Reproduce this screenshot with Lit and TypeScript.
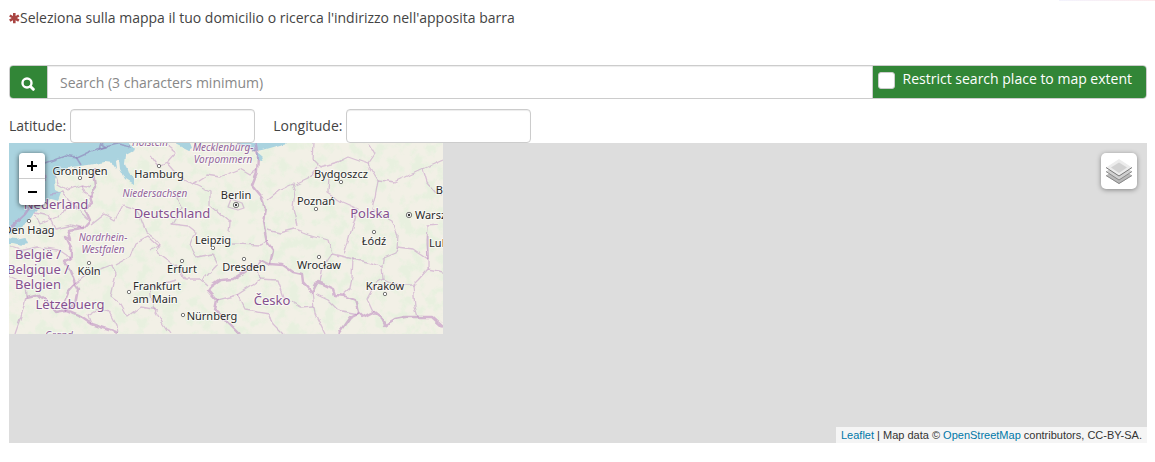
import { LitElement, html, svg, css } from "lit";
import { customElement } from "lit/decorators.js";

type Label = { text: string; x: number; y: number; kind: "city" | "country" | "region" };

const labels: Label[] = [
  { text: "Holstein", x: 150, y: 146, kind: "region" },
  { text: "Mecklenburg-", x: 223, y: 151, kind: "region" },
  { text: "Vorpommern", x: 223, y: 163, kind: "region" },
  { text: "Niedersachsen", x: 155, y: 197, kind: "region" },
  { text: "Nordrhein-", x: 103, y: 241, kind: "region" },
  { text: "Westfalen", x: 103, y: 253, kind: "region" },
  { text: "Grand", x: 59, y: 339, kind: "region" },
  { text: "Nederland", x: 56, y: 209, kind: "country" },
  { text: "Deutschland", x: 172, y: 218, kind: "country" },
  { text: "Polska", x: 370, y: 218, kind: "country" },
  { text: "België /", x: 38, y: 259, kind: "country" },
  { text: "Belgique /", x: 38, y: 274, kind: "country" },
  { text: "Belgien", x: 38, y: 289, kind: "country" },
  { text: "Lëtzebuerg", x: 70, y: 309, kind: "country" },
  { text: "Česko", x: 272, y: 305, kind: "country" },
  { text: "Groningen", x: 80, y: 175, kind: "city" },
  { text: "Hamburg", x: 159, y: 178, kind: "city" },
  { text: "Berlin", x: 236, y: 199, kind: "city" },
  { text: "Bydgoszcz", x: 341, y: 178, kind: "city" },
  { text: "Poznań", x: 316, y: 205, kind: "city" },
  { text: "Warszawa", x: 441, y: 219, kind: "city" },
  { text: "Białystok", x: 459, y: 194, kind: "city" },
  { text: "Lublin", x: 445, y: 247, kind: "city" },
  { text: "Łódź", x: 374, y: 245, kind: "city" },
  { text: "Den Haag", x: 29, y: 234, kind: "city" },
  { text: "Leipzig", x: 213, y: 244, kind: "city" },
  { text: "Dresden", x: 244, y: 271, kind: "city" },
  { text: "Wrocław", x: 319, y: 269, kind: "city" },
  { text: "Erfurt", x: 182, y: 273, kind: "city" },
  { text: "Köln", x: 89, y: 275, kind: "city" },
  { text: "Frankfurt", x: 157, y: 290, kind: "city" },
  { text: "am Main", x: 155, y: 303, kind: "city" },
  { text: "Nürnberg", x: 212, y: 320, kind: "city" },
  { text: "Kraków", x: 385, y: 290, kind: "city" },
];

const towns: [number, number][] = [
  [80, 178], [159, 166], [341, 182], [316, 209], [374, 232], [29, 221], [213, 248],
  [244, 259], [319, 257], [182, 261], [89, 263], [129, 292], [183, 315], [385, 294],
];
const capitals: [number, number][] = [[236, 205], [409, 215]];

const nationalBorders = [
  "M94 168L95 179L96 188L90 196L92 204L85 209L90 220L83 228L68 230L71 239L66 237L71 247L71 257L65 262L70 270L75 284L78 288L75 304L66 310L78 315L91 324L118 333",
  "M75 284L68 292L63 304L66 310",
  "M9 229L25 214L45 185L43 164",
  "M255 142L258 155L257 172L252 185L262 197L265 209L263 222L267 242L273 250L270 264",
  "M270 265L260 260L257 265L247 270L233 279L220 280L210 287L208 290L217 300L215 310L228 322L240 334",
  "M270 264L283 265L293 272L302 274L303 282L312 292L317 282L323 284L333 289L335 295L345 296L355 300L358 312L363 317L373 312L382 319L385 325L395 319L405 317L418 317L432 317L443 327",
  "M358 313L350 317L345 324L338 334",
  "M26 297L38 294L45 300L55 312L66 310",
];

const seaBorders = [
  "M43 164L65 156L77 158L90 152L105 147L118 144L132 147",
  "M76 157L81 165",
  "M101 143L99 149L107 147Z",
  "M236 143L256 151",
];

const regionalBorders = [
  "M55 174L58 184L68 190L81 185L91 187",
  "M81 185L84 192L92 197",
  "M51 194L63 192L75 207L88 219",
  "M35 212L48 215L55 229L71 225L84 228",
  "M35 214L40 224L58 217L66 207",
  "M91 225L105 214L115 220L123 205L135 209L141 219L146 232L155 239L160 245",
  "M150 155L158 166L167 162L180 177L193 184L207 175L220 177L240 169L250 175L257 170",
  "M167 146L176 153L168 162",
  "M193 184L210 192L210 205L230 222L229 232",
  "M176 196L182 208L172 224L187 226L195 232L190 244",
  "M267 200L280 190L293 184L295 190L293 209L297 225",
  "M313 142L312 159L320 167L338 162L348 157L368 164L375 154L370 145",
  "M317 167L308 179L295 185",
  "M328 175L327 192L342 202L358 209L352 228L348 242L344 254",
  "M368 164L378 180L375 197L372 209L392 220L398 235L397 248",
  "M378 180L395 182L423 169L443 160",
  "M423 169L427 182L435 192L443 196",
  "M438 224L428 225L427 242L428 259",
  "M267 230L280 233L295 229L308 234L328 240L332 254L345 257L353 259",
  "M332 254L323 267L320 282",
  "M353 259L375 264L382 267L383 259L395 254L398 247L413 249L428 259",
  "M353 259L352 277L350 289L343 295",
  "M382 267L383 279L375 284L367 299L373 312",
  "M428 237L428 269L418 280L413 285L395 285L383 279",
  "M428 269L443 272",
  "M413 285L415 307L418 317",
  "M312 292L315 314L325 334",
  "M315 294L328 300L338 310L358 314",
  "M150 250L160 245L156 251L175 265L185 279L200 279L207 285",
  "M190 244L197 257L213 254L218 264L203 280",
  "M233 244L260 245L268 240",
  "M177 280L150 287L153 307L163 324L170 334",
  "M217 300L237 295L260 280L258 269",
  "M237 294L245 310L270 314L273 324L283 334",
  "M260 279L277 280L283 297L300 307L314 306",
  "M9 277L25 284L26 297L21 317L15 334",
  "M9 245L24 250L38 247L58 250L70 258",
  "M75 284L88 274L111 265L116 274L111 297L121 304L128 317L141 307L158 310",
  "M116 265L130 257L135 244L148 237L158 246",
  "M91 324L88 316L98 310L110 312L117 325L118 333",
];

@customElement("map-overview")
class MapOverview extends LitElement {
  static styles = css`
    :host { display: block; }
    svg { display: block; width: 434px; height: 191px; }
    text { font-family: "Noto Sans", sans-serif; text-anchor: middle; paint-order: stroke; stroke: #fff; stroke-opacity: 0.6; stroke-width: 2px; stroke-linejoin: round; }
    .city { font-size: 11px; fill: #2b2b2b; }
    .country { font-size: 13px; fill: #85508f; }
    .region { font-size: 10px; font-style: italic; fill: #93639b; }
    .water { fill: #aad3df; }
    .lines { fill: none; stroke: #bb86c0; stroke-linejoin: round; }
    .national { stroke-width: 2.4px; opacity: 0.55; }
    .sea { stroke: #8d80b8; stroke-width: 1.6px; opacity: 0.6; }
    .regional { stroke-width: 1.3px; opacity: 0.45; }
    .town { fill: #fff; stroke: #555; stroke-width: 0.8px; }
    .dot { fill: #333; }
  `;

  render() {
    return html`
      <svg viewBox="9 143 434 191" role="img" aria-label="Map">
        <defs>
          <filter id="forest" x="0" y="0" width="1" height="1">
            <feTurbulence type="fractalNoise" baseFrequency="0.08" numOctaves="5" seed="8" />
            <feColorMatrix values="0 0 0 0 .76  0 0 0 0 .88  0 0 0 0 .71  0 5 0 0 -2.3" />
          </filter>
          <filter id="jag" x="-5%" y="-5%" width="110%" height="110%">
            <feTurbulence type="fractalNoise" baseFrequency="0.12" numOctaves="1" seed="3" />
            <feDisplacementMap in="SourceGraphic" scale="6" xChannelSelector="R" yChannelSelector="G" />
          </filter>
        </defs>
        <rect x="9" y="143" width="434" height="191" fill="#f2f0e6" />
        <rect x="9" y="143" width="434" height="191" filter="url(#forest)" opacity="0.6" />
        <g filter="url(#jag)">
          <path class="water" d="M0 133H130V143L135 150L126 155L125 164L128 173L134 178V185L126 180L120 168L119 158L116 160L117 169L113 163L105 162L88 165L71 167L58 172L54 179L55 190L61 193L58 201L50 199L45 204L38 209L35 212L28 222L18 229L9 235L0 240Z" />
          <path class="water" d="M0 237L16 239L25 237L28 244L22 245L14 243L0 243Z" />
          <path class="water" d="M174 135V143L180 146L188 150L192 148L190 143V135Z" />
          <path class="water" d="M238 135V143L247 147L256 151L262 150L276 146L288 143V135Z" />
          <path class="water" d="M257 151L264 157L262 160L257 159Z" />
        </g>
        <g class="lines" filter="url(#jag)">
          ${regionalBorders.map((d) => svg`<path class="regional" d=${d} />`)}
          ${nationalBorders.map((d) => svg`<path class="national" d=${d} />`)}
          ${seaBorders.map((d) => svg`<path class="sea" d=${d} />`)}
        </g>
        <path class="regional lines" d="M228 207L231 199L242 203L244 208L238 210Z" />
        ${towns.map(([x, y]) => svg`<circle class="town" cx=${x} cy=${y} r="1.7" />`)}
        ${capitals.map(([x, y]) => svg`
          <circle class="town" cx=${x} cy=${y} r="2.7" /><circle class="dot" cx=${x} cy=${y} r="1.2" />`)}
        ${labels.map((l) => svg`<text class=${l.kind} x=${l.x} y=${l.y}>${l.text}</text>`)}
      </svg>
    `;
  }
}

@customElement("app-root")
class AppRoot extends LitElement {
  static styles = css`
    :host {
      display: block;
      padding: 8px 8px 0 9px;
      font-family: "Open Sans", sans-serif;
      font-size: 14px;
      line-height: 20px;
      color: #444;
      background: linear-gradient(90deg, #f3f3fd, #fdeaec) top right / 96px 1px no-repeat;
    }
    *, *::before { box-sizing: border-box; }
    .hint { display: flex; align-items: center; margin: 0 0 37px; }
    .hint svg { width: 11px; height: 12px; fill: #a94442; }
    .search { display: flex; height: 34px; border: 1px solid #ccc; border-radius: 4px; overflow: hidden; background: #fff; }
    .search-button { width: 38px; padding: 4px 2px 0 0; border: 0; border-right: 1px solid #ccc; background: #328637; display: flex; align-items: center; justify-content: center; }
    .search-button svg { width: 14px; height: 14px; }
    input { font: inherit; color: #555; }
    .query { flex: 1; min-width: 0; border: 0; padding: 1px 12px 0; box-shadow: inset 0 1px 1px rgba(0, 0, 0, 0.075); }
    .query::placeholder { color: #888; opacity: 1; }
    .restrict { display: flex; align-items: flex-start; gap: 8px; padding: 3px 14px 0 5px; border-left: 1px solid #ccc; background: #328637; color: #fff; }
    .restrict input { appearance: none; width: 17px; height: 17px; margin: 3px 0 0; border: 1px solid #ccc; border-radius: 3px; background: #fff; }
    .restrict input:checked { background: #444; }
    .coords { display: flex; gap: 18px; margin-top: 10px; }
    .field { display: flex; align-items: center; gap: 4px; }
    .field input { width: 185px; height: 34px; padding: 6px 12px; border: 1px solid #ccc; border-radius: 4px; background: #fff; box-shadow: inset 0 1px 1px rgba(0, 0, 0, 0.075); }
    .map { position: relative; height: 300px; overflow: hidden; background: #ddd; }
    .zoom { position: absolute; top: 10px; left: 10px; width: 26px; border-radius: 4px; box-shadow: 0 1px 5px rgba(0, 0, 0, 0.65); overflow: hidden; }
    .zoom button { display: flex; align-items: center; justify-content: center; width: 26px; height: 26px; padding: 0; border: 0; background: #fff; color: #000; }
    .zoom button:first-child { border-bottom: 1px solid #ccc; }
    .zoom svg { width: 12px; height: 12px; }
    .layers { position: absolute; top: 10px; right: 10px; display: flex; align-items: center; justify-content: center; width: 36px; height: 36px; padding: 0; border: 0; border-radius: 5px; background: #fff; box-shadow: 0 1px 5px rgba(0, 0, 0, 0.4); }
    .attribution { position: absolute; right: 0; bottom: 0; padding: 0 5px; background: rgba(255, 255, 255, 0.7); color: #333; font: 11px/16px "Liberation Sans", Arial, sans-serif; }
    .attribution a { color: #0078a8; text-decoration: none; }
  `;

  render() {
    return html`
      <p class="hint">
        <svg viewBox="0 0 11 12" aria-hidden="true"><path d="M4 1h2.600v3L9.200 2.400l1.300 2.200L7.900 6.100l2.600 1.500-1.300 2.200L6.600 8.300v3H4v-3L1.400 9.800.100 7.600 2.700 6.100.100 4.600l1.300-2.200L4 4z" /></svg>
        <span>Seleziona sulla mappa il tuo domicilio o ricerca l'indirizzo nell'apposita barra</span>
      </p>
      <div class="search">
        <button class="search-button" type="button" aria-label="Search">
          <svg viewBox="0 0 14 14" fill="none" stroke="#fff"><circle cx="6" cy="6" r="4.500" stroke-width="2.400" /><path d="M9.500 9.500l2.800 2.800" stroke-width="3" stroke-linecap="round" /></svg>
        </button>
        <input class="query" type="text" aria-label="Search" placeholder="Search (3 characters minimum)" />
        <label class="restrict"><input type="checkbox" />Restrict search place to map extent</label>
      </div>
      <div class="coords">
        <div class="field"><label for="lat">Latitude:</label><input id="lat" type="text" /></div>
        <div class="field"><label for="lng">Longitude:</label><input id="lng" type="text" /></div>
      </div>
      <div class="map">
        <map-overview></map-overview>
        <div class="zoom">
          <button type="button" aria-label="Zoom in"><svg viewBox="0 0 12 12"><path d="M5 1h2v4h4v2H7v4H5V7H1V5h4z" /></svg></button>
          <button type="button" aria-label="Zoom out"><svg viewBox="0 0 12 12"><path d="M2 5h9v2H2z" /></svg></button>
        </div>
        <button class="layers" type="button" aria-label="Layers">
          <svg width="26" height="26" viewBox="0 0 26 26">
            <path d="M0 17.500L13 9l13 8.500L13 26z" fill="#b9b9b9" />
            <path d="M0 17.500L13 25.500l13-8" fill="none" stroke="#888" />
            <path d="M0 13.500L13 5l13 8.500L13 22z" fill="#d0d0d0" />
            <path d="M0 13.500L13 22l13-8.500" fill="none" stroke="#888" />
            <path d="M0 9.500L13 1l13 8.500L13 18z" fill="#ececec" />
            <path d="M5 9.500L13 4.500l8 5-8 5.500z" fill="#d2d2d2" />
            <path d="M0 9.500L13 18l13-8.500" fill="none" stroke="#777" />
          </svg>
        </button>
        <div class="attribution"><a href="#">Leaflet</a> | Map data © <a href="#">OpenStreetMap</a> contributors, CC-BY-SA.</div>
      </div>
    `;
  }
}
